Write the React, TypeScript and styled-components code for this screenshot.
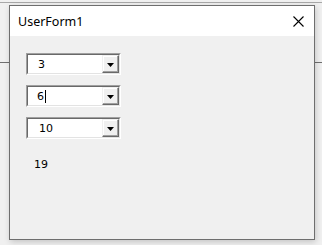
import React from "react";
import styled, { createGlobalStyle } from "styled-components";

const Global = createGlobalStyle`
  html, body { margin: 0; padding: 0; }
  body {
    background: #f0f0f0;
    width: 322px;
    height: 245px;
    overflow: hidden;
  }
`;

const Backdrop = styled.div`
  position: relative;
  width: 322px;
  height: 245px;
  box-sizing: border-box;
  padding: 5px 0 0 9px;
  background:
    linear-gradient(#a8a8a8, #a8a8a8) 0 2px / 100% 1px no-repeat,
    linear-gradient(#707070, #707070) 0 62px / 100% 1px no-repeat,
    #f0f0f0;
`;

const Window = styled.div`
  width: 306px;
  height: 235px;
  box-sizing: border-box;
  border: 1px solid #6e6e6e;
  background: #f0f0f0;
  display: flex;
  flex-direction: column;
  box-shadow: 1px 2px 6px rgba(0, 0, 0, 0.18);
`;

const TitleBar = styled.div`
  height: 30px;
  background: #ffffff;
  display: flex;
  align-items: center;
  justify-content: space-between;
  padding: 0 10px 0 8px;
  flex-shrink: 0;
`;

const Title = styled.span`
  font-family: "Noto Sans", "DejaVu Sans", sans-serif;
  font-size: 12.5px;
  color: #000;
  padding-top: 1px;
`;

const CloseIcon = styled.svg`
  width: 11px;
  height: 11px;
  display: block;
`;

const Content = styled.div`
  display: flex;
  flex-direction: column;
  align-items: flex-start;
  gap: 10px;
  padding: 17px 0 0 16px;
`;

const Combo = styled.div`
  width: 95px;
  height: 22px;
  box-sizing: border-box;
  border-top: 1px solid #a0a0a0;
  border-left: 1px solid #a0a0a0;
  border-right: 1px solid #ffffff;
  border-bottom: 1px solid #ffffff;
  display: flex;
`;

const ComboInner = styled.div`
  flex: 1;
  display: flex;
  border-top: 1px solid #696969;
  border-left: 1px solid #696969;
  border-right: 1px solid #e3e3e3;
  border-bottom: 1px solid #e3e3e3;
  background: #ffffff;
`;

const ComboText = styled.div<{ $indent: number }>`
  flex: 1;
  display: flex;
  align-items: center;
  padding-left: ${(p) => p.$indent}px;
  font-family: "DejaVu Sans", "Noto Sans", sans-serif;
  font-size: 11px;
  color: #000;
`;

const Caret = styled.span`
  display: inline-block;
  width: 1px;
  height: 13px;
  background: #000;
  margin-left: 1px;
`;

const DropButton = styled.div`
  width: 17px;
  box-sizing: border-box;
  background: #f0f0f0;
  border-top: 1px solid #f0f0f0;
  border-left: 1px solid #f0f0f0;
  border-right: 1px solid #696969;
  border-bottom: 1px solid #696969;
  box-shadow: inset -1px -1px 0 #a0a0a0, inset 1px 1px 0 #ffffff;
  display: flex;
  align-items: center;
  justify-content: center;
`;

const Arrow = styled.svg`
  width: 7px;
  height: 4px;
  display: block;
  margin-top: 1px;
`;

const Label = styled.div`
  font-family: "DejaVu Sans", "Noto Sans", sans-serif;
  font-size: 11px;
  color: #000;
  margin-top: 9px;
  padding-left: 8px;
`;

const items = [
  { value: "3", indent: 10, caret: false },
  { value: "6", indent: 9, caret: true },
  { value: "10", indent: 11, caret: false },
];

export default function App() {
  return (
    <>
      <Global />
      <Backdrop>
        <Window>
          <TitleBar>
            <Title>UserForm1</Title>
            <CloseIcon viewBox="0 0 11 11">
              <path d="M0.5 0.5 L10.5 10.5 M10.5 0.5 L0.5 10.5" stroke="#000" strokeWidth="1.1" />
            </CloseIcon>
          </TitleBar>
          <Content>
            {items.map((it) => (
              <Combo key={it.value}>
                <ComboInner>
                  <ComboText $indent={it.indent}>
                    {it.value}
                    {it.caret && <Caret />}
                  </ComboText>
                  <DropButton>
                    <Arrow viewBox="0 0 7 4">
                      <path d="M0 0 H7 L3.5 4 Z" fill="#000" />
                    </Arrow>
                  </DropButton>
                </ComboInner>
              </Combo>
            ))}
            <Label>19</Label>
          </Content>
        </Window>
      </Backdrop>
    </>
  );
}
